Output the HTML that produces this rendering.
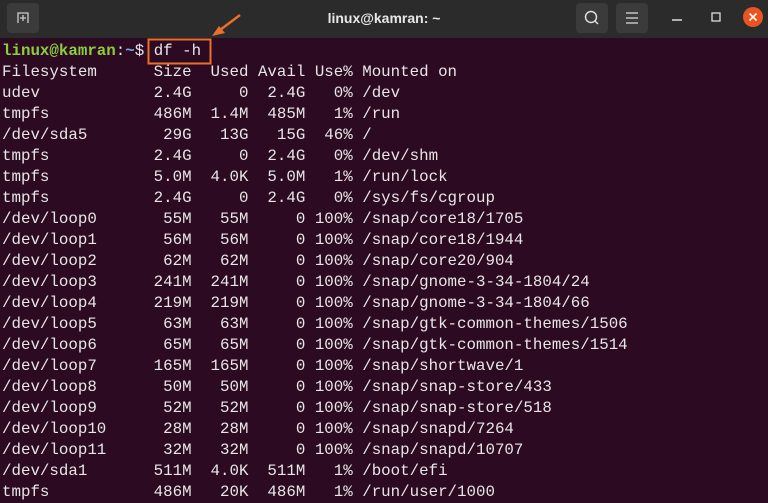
<!DOCTYPE html>
<html><head><style>
body{margin:0;width:768px;height:501px;overflow:hidden;background:#2c0a22;font-family:"Liberation Mono",monospace;}
.bar{position:absolute;left:0;top:0;width:768px;height:38px;background:#2b2b2b;}
.title{position:absolute;left:0;width:768px;top:10px;text-align:center;color:#e8e8e8;font:bold 14px "Liberation Sans",sans-serif;}
.btn{position:absolute;top:3px;width:32px;height:30px;background:#3b3b3b;border-radius:4px;}
pre{position:absolute;left:2px;top:41px;margin:0;font-size:15.8px;line-height:21px;color:#e6e6e6;}
.g{color:#8ad03a;font-weight:bold}.b{color:#7aa2d6;font-weight:bold}
</style></head><body>
<div class="bar">
<div class="btn" style="left:7px"><svg width="32" height="30"><path d="M11 20V10h10v10" fill="none" stroke="#ccc" stroke-width="1.3"/><path d="M16 12v6M13 15h6" stroke="#ccc" stroke-width="1.3"/></svg></div>
<div class="title">linux@kamran: ~</div>
<div class="btn" style="left:576px"><svg width="32" height="30"><circle cx="15" cy="14" r="5.5" fill="none" stroke="#ddd" stroke-width="1.5"/><path d="M19 18l3 3" stroke="#ddd" stroke-width="1.5"/></svg></div>
<div class="btn" style="left:616px"><svg width="32" height="30"><path d="M10 10h12M10 15h12M10 20h12" stroke="#ddd" stroke-width="1.3"/></svg></div>
<svg style="position:absolute;left:665px;top:0" width="103" height="38"><path d="M7 20h10" stroke="#ddd" stroke-width="1.5"/><rect x="47" y="13" width="8" height="8" fill="none" stroke="#ddd" stroke-width="1.3"/><circle cx="88" cy="17" r="10" fill="#e95420"/><path d="M84.5 13.5l7 7M91.5 13.5l-7 7" stroke="#fff" stroke-width="1.6"/></svg>
</div>
<svg style="position:absolute;left:0;top:0" width="768" height="501"><path d="M240 15L220 30" stroke="#e8702a" stroke-width="2.5"/><path d="M212 36l13-3-6-7z" fill="#e8702a"/><rect x="148.5" y="39.5" width="62" height="24" fill="none" stroke="#e8702a" stroke-width="2"/></svg>
<pre><span class="g">linux@kamran</span>:<span class="b">~</span>$ df -h
Filesystem      Size  Used Avail Use% Mounted on
udev            2.4G     0  2.4G   0% /dev
tmpfs           486M  1.4M  485M   1% /run
/dev/sda5        29G   13G   15G  46% /
tmpfs           2.4G     0  2.4G   0% /dev/shm
tmpfs           5.0M  4.0K  5.0M   1% /run/lock
tmpfs           2.4G     0  2.4G   0% /sys/fs/cgroup
/dev/loop0       55M   55M     0 100% /snap/core18/1705
/dev/loop1       56M   56M     0 100% /snap/core18/1944
/dev/loop2       62M   62M     0 100% /snap/core20/904
/dev/loop3      241M  241M     0 100% /snap/gnome-3-34-1804/24
/dev/loop4      219M  219M     0 100% /snap/gnome-3-34-1804/66
/dev/loop5       63M   63M     0 100% /snap/gtk-common-themes/1506
/dev/loop6       65M   65M     0 100% /snap/gtk-common-themes/1514
/dev/loop7      165M  165M     0 100% /snap/shortwave/1
/dev/loop8       50M   50M     0 100% /snap/snap-store/433
/dev/loop9       52M   52M     0 100% /snap/snap-store/518
/dev/loop10      28M   28M     0 100% /snap/snapd/7264
/dev/loop11      32M   32M     0 100% /snap/snapd/10707
/dev/sda1       511M  4.0K  511M   1% /boot/efi
tmpfs           486M   20K  486M   1% /run/user/1000</pre>
</body></html>
